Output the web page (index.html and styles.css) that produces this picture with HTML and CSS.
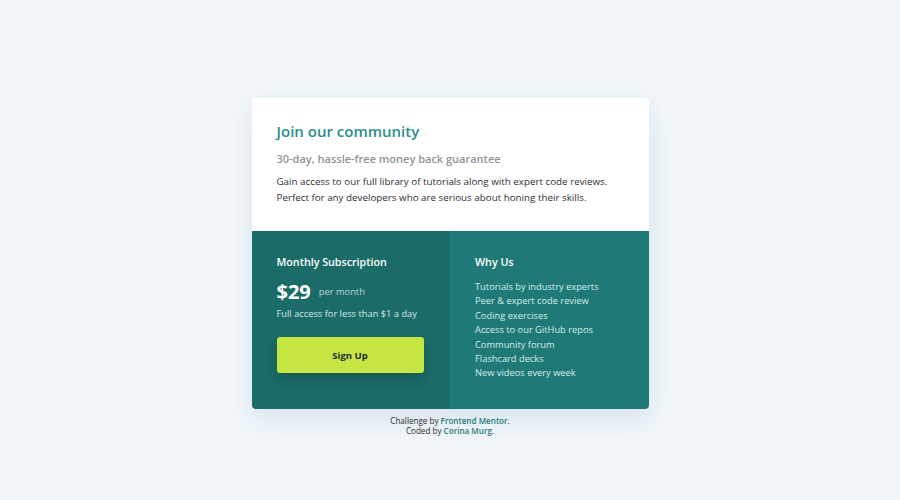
FILE: index.html
```html
<!DOCTYPE html>
<html lang="en">
<head>
<meta charset="utf-8">
<title>Join our community</title>
<link rel="stylesheet" href="styles.css">
</head>
<body>
<main class="page">
  <section class="card">
    <div class="intro">
      <h1 class="title">Join our community</h1>
      <h2 class="subtitle">30-day, hassle-free money back guarantee</h2>
      <p class="desc">Gain access to our full library of tutorials along with expert code reviews.<br>Perfect for any developers who are serious about honing their skills.</p>
    </div>
    <div class="bottom">
      <div class="sub">
        <h3 class="label">Monthly Subscription</h3>
        <div class="price"><span class="amount">$29</span><span class="per">per month</span></div>
        <p class="access">Full access for less than $1 a day</p>
        <button class="signup">Sign Up</button>
      </div>
      <div class="why">
        <h3 class="label">Why Us</h3>
        <ul class="list">
          <li>Tutorials by industry experts</li>
          <li>Peer &amp; expert code review</li>
          <li>Coding exercises</li>
          <li>Access to our GitHub repos</li>
          <li>Community forum</li>
          <li>Flashcard decks</li>
          <li>New videos every week</li>
        </ul>
      </div>
    </div>
  </section>
  <footer class="attribution">
    Challenge by <a href="#">Frontend Mentor</a>.<br>
    Coded by <a href="#">Corina Murg</a>.
  </footer>
</main>
</body>
</html>
```
FILE: styles.css
```css
* { box-sizing: border-box; }
html, body { margin: 0; padding: 0; }
body {
  background: #f0f6fa;
  font-family: "Open Sans", "Noto Sans", sans-serif;
  width: 900px;
  height: 500px;
}
.page {
  display: flex;
  flex-direction: column;
  align-items: center;
  padding-top: 98px;
}
.card {
  width: 397px;
  border-radius: 4px;
  overflow: hidden;
  background: #fff;
  box-shadow: 0 10px 24px rgba(40, 110, 140, 0.12);
}
.intro {
  padding: 23px 25px 24px;
  height: 133px;
}
.title {
  margin: 0;
  font-size: 15px;
  line-height: 20px;
  font-weight: 600;
  color: #2a8f8a;
}
.subtitle {
  margin: 10px 0 0;
  font-size: 11px;
  line-height: 15px;
  font-weight: 600;
  color: #8e9498;
}
.desc {
  margin: 8px 0 0;
  font-size: 9.8px;
  line-height: 16px;
  color: #2f2f2f;
}
.bottom {
  display: flex;
  height: 178px;
}
.sub, .why {
  flex: 1;
  padding: 24px 25px;
  color: #fff;
}
.sub { background: #1b6b68; }
.why { background: #1f7a77; }
.label {
  margin: 0;
  font-size: 10.7px;
  line-height: 14px;
  font-weight: 600;
}
.price {
  display: flex;
  align-items: center;
  margin-top: 10px;
  height: 24px;
}
.amount {
  font-size: 20px;
  font-weight: 700;
}
.per {
  margin-left: 8px;
  font-size: 9.3px;
  color: #b9d8d6;
}
.access {
  margin: 5px 0 0;
  font-size: 9.3px;
  line-height: 12px;
  color: #d6e9e8;
}
.signup {
  display: block;
  margin-top: 17px;
  width: 147px;
  height: 36px;
  border: 0;
  border-radius: 3px;
  background: #c4e542;
  font-family: inherit;
  font-size: 9.5px;
  font-weight: 700;
  color: #1e2a2a;
  box-shadow: 0 6px 12px rgba(0, 0, 0, 0.18);
}
.list {
  list-style: none;
  margin: 11px 0 0;
  padding: 0;
  font-size: 9.3px;
  line-height: 14.4px;
  color: #d6ebea;
}
.attribution {
  margin-top: 7px;
  font-size: 8.1px;
  line-height: 10px;
  text-align: center;
  color: #2b2b2b;
}
.attribution a {
  color: #1f7a77;
  text-decoration: none;
  font-weight: 600;
}
```
